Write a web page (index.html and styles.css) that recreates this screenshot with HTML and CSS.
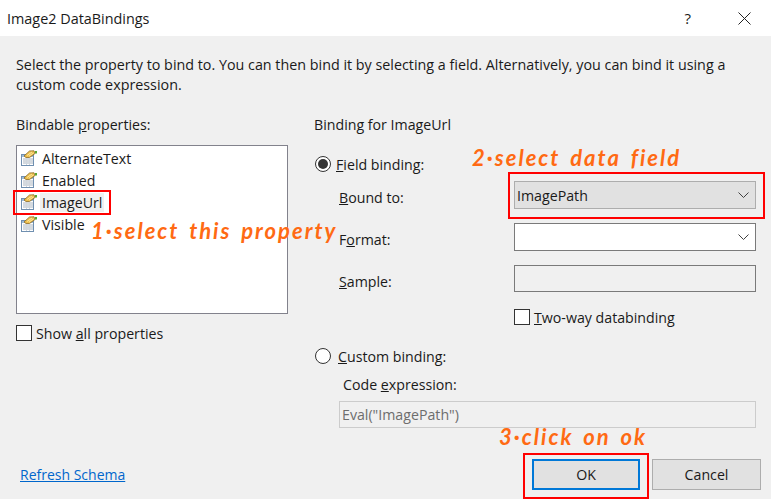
FILE: index.html
```html
<!DOCTYPE html>
<html lang="en">
<head>
    <meta charset="UTF-8">
    <meta name="viewport" content="width=device-width, initial-scale=1.0">
    <title>Image2 DataBindings</title>
    <link rel="stylesheet" href="styles.css">
</head>
<body>
    <svg class="defs" width="0" height="0">
        <symbol id="prop" viewBox="0 0 16 16">
            <rect x=".5" y="4.500" width="12" height="11" fill="#fff" stroke="#6f8fb0"/>
            <path d="M1 5h11v2H1z" fill="#9dbad6"/>
            <path d="M2 9h10M2 11h10M2 13h10" stroke="#a9b4bf"/>
            <path d="M5.500 8v7M8.500 8v7" stroke="#cfd6dd"/>
            <path d="M3 6 8.500 1 13 .8 14 3.500 8.500 7.500 5 7.500z" fill="#eec04f" stroke="#8a6a24" stroke-width=".8"/>
            <path d="M6 5.500 11 2M8 6 12.500 3" stroke="#fff0b0" stroke-width=".8"/>
            <rect x="14" y="1" width="2" height="2.500" fill="#5aa832"/>
        </symbol>
        <symbol id="chev" viewBox="0 0 11 6">
            <path d="M.5.500 5.500 5.500 10.500.500" fill="none" stroke="#404040" stroke-width="1"/>
        </symbol>
    </svg>

    <div class="dialog">
        <div class="titlebar">
            <span class="title">Image2 DataBindings</span>
            <span class="help">?</span>
            <svg class="close" width="13" height="13" viewBox="0 0 13 13"><path d="M.5.500 12.500 12.500M12.500.500.500 12.500" stroke="#222" fill="none"/></svg>
        </div>

        <div class="content">
            <p class="intro">Select the property to bind to. You can then bind it by selecting a field. Alternatively, you can bind it using a custom code expression.</p>

            <div class="columns">
                <!-- Left column -->
                <div class="left">
                    <div class="heading">Bindable <u>p</u>roperties:</div>
                    <div class="listbox">
                        <div class="item"><svg class="icon"><use href="#prop"/></svg><span>AlternateText</span></div>
                        <div class="item"><svg class="icon"><use href="#prop"/></svg><span>Enabled</span></div>
                        <div class="item"><svg class="icon"><use href="#prop"/></svg><span class="selected">ImageUrl</span></div>
                        <div class="item"><svg class="icon"><use href="#prop"/></svg><span>Visible</span></div>
                    </div>
                    <label class="check show-all"><span class="box"></span><span>Show <u>a</u>ll properties</span></label>
                </div>

                <!-- Right column -->
                <div class="right">
                    <div class="heading">Binding for ImageUrl</div>
                    <label class="radio field-radio"><span class="dot on"></span><span><u>F</u>ield binding:</span></label>
                    <div class="fields">
                        <span class="name"><u>B</u>ound to:</span>
                        <div class="combo bound"><span>ImagePath</span><svg class="chev"><use href="#chev"/></svg></div>
                        <span class="name">F<u>o</u>rmat:</span>
                        <div class="combo"><span></span><svg class="chev"><use href="#chev"/></svg></div>
                        <span class="name"><u>S</u>ample:</span>
                        <div class="textbox"></div>
                    </div>
                    <label class="check two-way"><span class="box"></span><span><u>T</u>wo-way databinding</span></label>
                    <label class="radio custom-radio"><span class="dot"></span><span><u>C</u>ustom binding:</span></label>
                    <div class="code-label">Code <u>e</u>xpression:</div>
                    <div class="code-input">Eval("ImagePath")</div>
                </div>
            </div>

            <div class="footer">
                <a class="refresh" href="#">Refresh Schema</a>
                <div class="buttons">
                    <button class="btn default">OK</button>
                    <button class="btn">Cancel</button>
                </div>
            </div>
        </div>

        <!-- Annotations drawn on top of the dialog -->
        <div class="mark mark-item"></div>
        <div class="mark mark-bound"></div>
        <div class="mark mark-ok"></div>
        <span class="note note-1">1·select this property</span>
        <span class="note note-2">2·select data field</span>
        <span class="note note-3">3·click on ok</span>
    </div>
</body>
</html>
```

FILE: styles.css
```css
* {
    box-sizing: border-box;
}
html, body {
    margin: 0;
    height: 100%;
}
body {
    font-family: "Open Sans", "Noto Sans", sans-serif;
    font-size: 14.2px;
    color: #1a1a1a;
    background-color: #f0f0f0;
    overflow: hidden;
}
.defs {
    position: absolute;
}
.dialog {
    position: relative;
    width: 771px;
    height: 499px;
}

/* Title bar */
.titlebar {
    display: flex;
    align-items: center;
    height: 36px;
    padding: 0 20px 0 7px;
    background-color: #fff;
}
.title {
    flex: 1;
    font-size: 14.4px;
}
.help {
    margin-right: 47px;
    font-size: 15px;
}

/* Content */
.content {
    padding: 19px 10px 0 16px;
}
.intro {
    margin: 0;
    width: 725px;
    font-size: 14.32px;
    line-height: 20px;
}
.columns {
    display: flex;
    margin-top: 20px;
}
.left {
    width: 298px;
}
.right {
    width: 441px;
}
.heading {
    height: 20px;
    line-height: 20px;
}

/* Property list */
.listbox {
    width: 272px;
    height: 169px;
    margin-top: 10px;
    padding: 1px 0 0 4px;
    background-color: #fff;
    border: 1px solid #82828c;
}
.item {
    display: flex;
    align-items: center;
    height: 22px;
}
.icon {
    width: 16px;
    height: 16px;
    margin-right: 5px;
}
.selected {
    padding: 0 2px;
    margin-left: -2px;
    background-color: #f0f0f0;
}
.check {
    display: flex;
    align-items: center;
    height: 20px;
}
.box {
    width: 16px;
    height: 16px;
    margin-right: 4px;
    background-color: #fff;
    border: 1px solid #333;
}
.show-all {
    margin: 9px 0 0 0;
}

/* Binding panel */
.radio {
    display: flex;
    align-items: center;
    height: 20px;
}
.dot {
    position: relative;
    width: 16px;
    height: 16px;
    margin-right: 5px;
    background-color: #fff;
    border: 1px solid #333;
    border-radius: 50%;
}
.dot.on::after {
    content: "";
    position: absolute;
    inset: 2px;
    background-color: #333;
    border-radius: 50%;
}
.field-radio {
    margin: 19px 0 0 1px;
}
.fields {
    display: grid;
    grid-template-columns: 175px 242px;
    grid-template-rows: 28px 28px 27px;
    row-gap: 14px;
    align-items: center;
    margin: 7px 0 0 25px;
}
.name {
    padding-top: 5px;
}
.combo, .textbox {
    height: 100%;
}
.combo {
    display: flex;
    align-items: center;
    justify-content: space-between;
    padding: 0 6px 0 2px;
    background-color: #fff;
    border: 1px solid #7a7a7a;
}
.combo.bound {
    background-color: #e1e1e1;
    border-color: #adadad;
}
.chev {
    width: 11px;
    height: 6px;
}
.textbox {
    border: 1px solid #7a7a7a;
}
.two-way {
    margin: 15px 0 0 200px;
}
.custom-radio {
    margin: 19px 0 0 1px;
}
.custom-radio .dot {
    margin-right: 7px;
}
.code-label {
    margin: 9px 0 0 29px;
    height: 20px;
    line-height: 20px;
}
.code-input {
    width: 417px;
    height: 27px;
    margin: 6px 0 0 25px;
    padding: 0 2px;
    line-height: 25px;
    color: #6d6d6d;
    border: 1px solid #ccc;
}

/* Footer */
.footer {
    position: relative;
    display: flex;
    align-items: center;
    justify-content: space-between;
    height: 31px;
    margin-top: 31px;
}
.refresh {
    margin-left: 4px;
    font-size: 14px;
    color: #0066cc;
}
.buttons {
    display: flex;
    gap: 12px;
}
.btn {
    width: 109px;
    height: 31px;
    font: inherit;
    color: inherit;
    background-color: #e1e1e1;
    border: 1px solid #adadad;
}
.btn.default {
    width: 108px;
    border: 2px solid #0078d7;
}

/* Annotations */
.mark {
    position: absolute;
    border: 2px solid #f00;
}
.mark-item {
    left: 13px;
    top: 190px;
    width: 98px;
    height: 25px;
}
.mark-bound {
    left: 508px;
    top: 172px;
    width: 257px;
    height: 47px;
}
.mark-ok {
    left: 523px;
    top: 453px;
    width: 126px;
    height: 46px;
}
.note {
    position: absolute;
    font-family: "Lato", sans-serif;
    font-style: italic;
    font-weight: 700;
    font-size: 22px;
    line-height: 28px;
    letter-spacing: 2px;
    word-spacing: 3px;
    color: #ff6a13;
    white-space: nowrap;
}
.note-1 {
    left: 91px;
    top: 217px;
}
.note-2 {
    left: 472px;
    top: 144px;
}
.note-3 {
    left: 499px;
    top: 423px;
}
```
